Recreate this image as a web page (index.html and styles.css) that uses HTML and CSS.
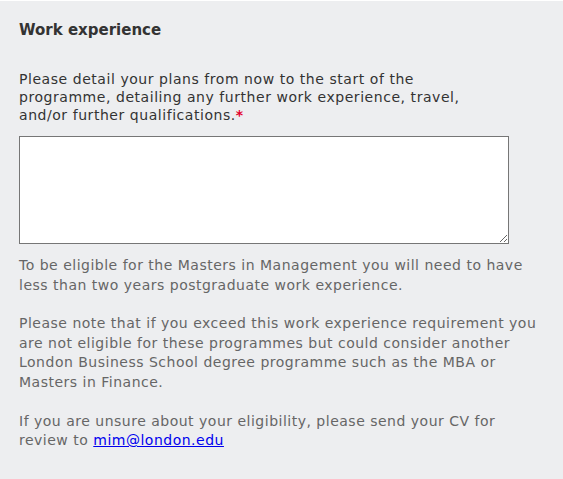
FILE: index.html
```html
<!DOCTYPE html>
<html lang="en">
<head>
<meta charset="utf-8">
<title>Work experience</title>
<link rel="stylesheet" href="styles.css">
</head>
<body>
<section class="panel">
  <h2 class="panel-title">Work experience</h2>
  <label class="field-label" for="plans">Please detail your plans from now to the start of the<br>programme, detailing any further work experience, travel,<br>and/or further qualifications.<span class="req">*</span></label>
  <textarea id="plans" class="field-input"></textarea>
  <div class="help">
    <p>To be eligible for the Masters in Management you will need to have less than two years postgraduate work experience.</p>
    <p>Please note that if you exceed this work experience requirement you are not eligible for these programmes but could consider another London Business School degree programme such as the MBA or Masters in Finance.</p>
    <p>If you are unsure about your eligibility, please send your CV for review to <a href="mailto:mim@london.edu">mim@london.edu</a></p>
  </div>
</section>
</body>
</html>
```

FILE: styles.css
```css
html, body {
  margin: 0;
  padding: 0;
  background: #edeef0;
}
body {
  font-family: "DejaVu Sans", Verdana, sans-serif;
  font-size: 14px;
  border-top: 1px solid #ffffff;
}
.panel {
  display: flex;
  flex-direction: column;
  align-items: flex-start;
  padding: 20px 19px 20px 19px;
}
.panel-title {
  margin: 0;
  font-size: 15px;
  line-height: 18px;
  font-weight: bold;
  color: #333333;
}
.field-label {
  margin-top: 31px;
  font-size: 14px;
  line-height: 18px;
  letter-spacing: 0.55px;
  color: #333333;
}
.req {
  color: #e4002b;
  font-weight: bold;
}
.field-input {
  margin: 12px 0 0 0;
  box-sizing: border-box;
  width: 490px;
  height: 108px;
  border: 1px solid #767676;
  border-radius: 0;
  background: #ffffff;
  padding: 2px;
  font-family: "DejaVu Sans", sans-serif;
  font-size: 14px;
}
.help {
  margin-top: 12px;
  color: #666666;
  line-height: 19.6px;
  letter-spacing: 0.5px;
}
.help p {
  margin: 0 0 19px 0;
}
.help a {
  color: #0000ee;
}
```
